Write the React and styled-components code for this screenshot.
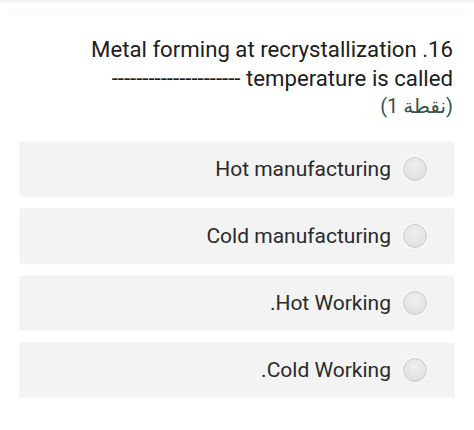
import React from "react";
import styled, { createGlobalStyle } from "styled-components";

const Global = createGlobalStyle`
  html, body { margin: 0; padding: 0; background: #ffffff; }
  body { font-family: Roboto, "Noto Sans", "Liberation Sans", sans-serif; }
`;

const Page = styled.div`
  width: 474px;
  height: 430px;
  overflow: hidden;
  background: #fff;
`;

const TopEdge = styled.div`
  height: 3px;
  background: #f5f5f5;
`;

const TopBand = styled.div`
  margin: 5px 9px 0 8px;
  height: 7px;
  background: #fbfbfb;
`;

const Question = styled.div`
  margin: 20px 21px 0 20px;
  text-align: right;
  color: #202020;
  font-size: 22.2px;
  line-height: 28.5px;
`;

const Line = styled.div`
  white-space: nowrap;
`;

const Points = styled.div`
  color: #37524a;
  font-size: 20px;
  line-height: 28px;
  font-family: Roboto, "Noto Sans", "DejaVu Sans", sans-serif;
`;

const Options = styled.div`
  margin: 22px 20px 0 20px;
  display: flex;
  flex-direction: column;
  gap: 13px;
`;

const Option = styled.div`
  height: 54px;
  background: #f3f3f3;
  box-shadow: 0 0 0 1px #f8f8f8, 0 1px 2px rgba(0, 0, 0, 0.03);
  display: flex;
  align-items: center;
  justify-content: flex-end;
  padding-right: 27px;
  gap: 12px;
`;

const Label = styled.span`
  font-size: 21px;
  color: #2a2a2a;
  white-space: nowrap;
`;

const Radio = styled.span`
  width: 22px;
  height: 22px;
  border-radius: 50%;
  border: 1px solid #cbcbcb;
  background: radial-gradient(circle at 50% 35%, #efefef 0%, #e3e3e3 65%, #d7d7d7 100%);
  box-shadow: 0 0 1px 1px rgba(255, 255, 255, 0.8);
  flex: none;
`;

const options = [
  "Hot manufacturing",
  "Cold manufacturing",
  ".Hot Working",
  ".Cold Working",
];

export default function App() {
  return (
    <Page>
      <Global />
      <TopEdge />
      <TopBand />
      <Question>
        <Line>Metal forming at recrystallization .16</Line>
        <Line>--------------------- temperature is called</Line>
        <Points>(1 نقطة)</Points>
      </Question>
      <Options>
        {options.map((o) => (
          <Option key={o}>
            <Label>{o}</Label>
            <Radio />
          </Option>
        ))}
      </Options>
    </Page>
  );
}
